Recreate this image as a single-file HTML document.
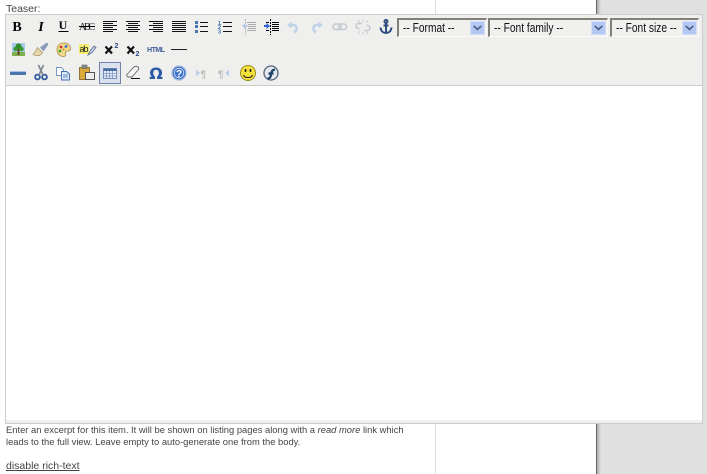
<!DOCTYPE html>
<html><head><meta charset="utf-8"><style>
html,body{margin:0;padding:0;background:#fff}
#p{position:relative;width:707px;height:474px;overflow:hidden;background:#fff;font-family:"Liberation Sans",sans-serif;color:#333}
.a{position:absolute}
svg.a{left:0;top:0}
.sel{position:absolute;top:18px;height:19px;box-sizing:border-box;background:#f0f0ee;border-top:2px solid #808078;border-left:2px solid #808078;border-right:1px solid #f8f8f4;border-bottom:1px solid #fbfbf6;font-size:13px;color:#111;line-height:16px;white-space:pre}
.sel b{position:absolute;left:4px;top:0;font-weight:normal;transform:scaleX(.785);transform-origin:0 0}
.sel i{position:absolute;right:1px;top:1px;width:15px;height:14px;box-sizing:border-box;background:#b4c7f4;border:1px solid #d5e0f8}
.sel i:after{content:"";position:absolute;left:3px;top:1px;width:5px;height:5px;border-right:2px solid #4d6185;border-bottom:2px solid #4d6185;transform:scale(.9,.8) rotate(45deg)}
.t{font-size:9.4px;line-height:12px;color:#444;white-space:nowrap;left:6px}
</style></head><body><div id="p">
<div class="a" style="left:435px;top:0;width:1px;height:474px;background:#ddd"></div>
<div class="a" style="left:596px;top:0;width:111px;height:474px;background:#e0e0e0"></div>
<div class="a" style="left:596px;top:0;width:5px;height:474px;background:linear-gradient(90deg,#666 0,#666 20%,#aaa 20%,#c8c8c8 60%,#e0e0e0 100%)"></div>
<div class="a t" style="top:3px;left:6px;font-size:10.500px;color:#444;line-height:13px">Teaser:</div>
<div class="a" style="left:5px;top:14px;width:698px;height:410px;box-sizing:border-box;border:1px solid #ccc;background:#efefee"></div>
<div class="a" style="left:6px;top:86px;width:696px;height:334px;background:#fff"></div>
<div class="a" style="left:6px;top:85px;width:696px;height:1px;background:#ccc"></div>
<div class="a" style="left:99px;top:62px;width:22px;height:22px;box-sizing:border-box;border:1px solid #6f83a8;background:#dbe2ee"></div>
<svg class="a" width="707" height="474" viewBox="0 0 707 474" style="font-family:'Liberation Sans',sans-serif">
<!-- row 1 -->
<text x="17" y="31" text-anchor="middle" font-family="Liberation Serif" font-weight="bold" font-size="14" fill="#000">B</text>
<text x="41" y="31" text-anchor="middle" font-family="Liberation Serif" font-weight="bold" font-style="italic" font-size="14" fill="#000">I</text>
<text x="63" y="29" text-anchor="middle" font-family="Liberation Serif" font-weight="bold" font-size="12" fill="#000">U</text>
<path d="M58.500 31.500h10" stroke="#000" stroke-width="1"/>
<text x="87" y="30" text-anchor="middle" font-family="Liberation Serif" font-size="10" fill="#222" textLength="16">ABC</text>
<path d="M79 26.500h16" stroke="#000"/>
<g stroke="#111" stroke-width="1">
<path d="M103 21.500h14M103 23.500h10M103 25.500h14M103 27.500h10M103 29.500h14M103 31.500h10"/>
<path d="M126 21.500h14M128 23.500h10M126 25.500h14M128 27.500h10M126 29.500h14M128 31.500h10"/>
<path d="M149 21.500h14M153 23.500h10M149 25.500h14M153 27.500h10M149 29.500h14M153 31.500h10"/>
<path d="M172 21.500h14M172 23.500h14M172 25.500h14M172 27.500h14M172 29.500h14M172 31.500h14"/>
<path d="M200 22.500h8M200 26.500h8M200 31.500h8M223 22.500h9M223 26.500h9M223 31.500h9"/>
</g>
<g fill="#4a76b5"><rect x="195" y="21" width="3" height="3"/><rect x="195" y="25" width="3" height="3"/><rect x="195" y="30" width="3" height="3"/></g>
<g font-size="5.500" font-weight="bold" fill="#3f6cae" text-anchor="middle"><text x="219.500" y="25">1</text><text x="219.500" y="29">2</text><text x="219.500" y="33.500">3</text></g>
<!-- outdent -->
<path d="M245.500 19v16" stroke="#b4b4b4" stroke-dasharray="2 1"/>
<path d="M247 22.500h9M248 24.500h8M248 26.500h8M248 28.500h8M247 30.500h9" stroke="#aaa"/>
<path d="M242 26l3.500-3v2h2v2h-2v2z" fill="#b5c9e6"/>
<!-- indent -->
<path d="M270.500 19v16" stroke="#000" stroke-dasharray="2 1"/>
<path d="M272 22.500h7M272 24.500h7M272 26.500h7M272 28.500h7M272 30.500h7M266 22.500h3M266 30.500h3" stroke="#000" stroke-width="1.100"/>
<path d="M264 25h2.500v-2l3.500 3-3.500 3v-2H264z" fill="#2c62d0"/>
<!-- undo/redo -->
<g fill="none" stroke="#c0d2ea" stroke-width="2.600"><path d="M291 25h2.500c3.500 0 4.500 5 .5 7.500"/><path d="M319 25h-2.500c-3.500 0 -4.500 5 -.5 7.500"/></g>
<path d="M287 25l4.500-3.500v7zM323 25l-4.500-3.500v7z" fill="#c0d2ea"/>
<!-- link -->
<g fill="none" stroke="#c6cad0" stroke-width="1.600"><rect x="333" y="24" width="8" height="5.500" rx="2.700"/><rect x="338.500" y="24" width="8" height="5.500" rx="2.700"/>
<path d="M362 23.500h-3.500a2.500 2.500 0 0 0 0 5h1M364 30.500h3.500a2.500 2.500 0 0 0 0-5h-1"/></g>
<path d="M363 19v3M358 20l2 3M368 20l-2 3M363 32v3M358 34l2-3M368 34l-2-3" stroke="#cbcdd0" fill="none"/>
<!-- anchor -->
<g fill="none" stroke="#2f4d7f" stroke-width="2"><circle cx="386" cy="21.500" r="1.500"/><path d="M386 23v10M383.500 25.500h5"/><path d="M380.500 27.500c.5 4 3 5.500 5.500 5.500s5-1.500 5.500-5.500"/></g>
<!-- row 2 -->
<rect x="12" y="43" width="13" height="13" fill="#a7c8ea"/><rect x="12" y="52" width="13" height="4" fill="#7db04a"/>
<circle cx="18.500" cy="46.500" r="3" fill="#2f8a2a"/><circle cx="15.500" cy="49" r="2.200" fill="#3a9a30"/><circle cx="21.500" cy="49" r="2.200" fill="#3a9a30"/><rect x="17.500" y="49" width="2" height="6" fill="#6a4420"/>
<path d="M37.500 47.500l5 5.500-3 2.500c-2 .5-5 0-6.500-1 1.500-1 2.500-3.500 4.500-7z" fill="#e6d8a8" stroke="#a3935f" stroke-width=".7"/>
<path d="M40 47.500l6-4.500c1.500-.5 2.500.5 2 2l-4.500 6.500z" fill="#8b9ab8"/>
<path d="M64 43c-4.500 0-7 2.500-7 6.500s2.500 7 6.500 7c2.500 0 2.500-2 2-3-.5-1.500 .5-2.500 2-2.500 2 0 3-1 3-2.500 0-3-3-5.500-6.500-5.500z" fill="#f3d98a" stroke="#a8893e" stroke-width=".8"/>
<circle cx="61" cy="47" r="1.400" fill="#c9362c"/><circle cx="66" cy="46.500" r="1.400" fill="#2c6ec9"/><circle cx="60" cy="51" r="1.400" fill="#3a9a30"/><circle cx="63.500" cy="49.500" r="1" fill="#d08b22"/>
<rect x="79" y="44" width="10" height="10" fill="#f5ee6e"/>
<text x="79.500" y="52" font-size="9" fill="#222" textLength="9">ab</text>
<path d="M88 55l2-4 4-5 2 1.500-4 5z" fill="#c9d6ea" stroke="#53688c" stroke-width=".8"/>
<path d="M105.500 46.500l6.500 7M112 46.500l-6.500 7M127.500 46.500l6.500 7M134 46.500l-6.500 7" stroke="#111" stroke-width="2.200"/>
<text x="114.500" y="48" font-size="7" font-weight="bold" fill="#2f4d7f">2</text>
<text x="135.500" y="56" font-size="7" font-weight="bold" fill="#2f4d7f">2</text>
<text x="156" y="52" text-anchor="middle" font-size="7" font-weight="bold" fill="#3f5f96" textLength="18">HTML</text>
<path d="M171 49.500h16" stroke="#222"/>
<!-- row 3 -->
<rect x="10" y="71" width="16" height="4" fill="#4a74b0"/><rect x="10" y="71" width="16" height="1" fill="#a5c0e4"/>
<g fill="none" stroke="#2f5a9e" stroke-width="1.800"><circle cx="37.500" cy="77" r="2.400"/><circle cx="44.500" cy="77" r="2.400"/></g>
<path d="M39 75l4.500-10M43 75l-4.500-10" stroke="#7f8790" stroke-width="1.700"/>
<path d="M56.500 67.500h5l2 2v6h-7z" fill="#fff" stroke="#6f93c6" stroke-width=".9"/><path d="M61.500 71.500h5l3 2.500v6h-8z" fill="#dfeafa" stroke="#3f6cae" stroke-width=".9"/>
<path d="M63 75h5M63 77h5" stroke="#3f6cae" stroke-width=".7"/>
<rect x="79.500" y="67.500" width="10" height="12" fill="#d9a93a" stroke="#7f5f1c" stroke-width=".8"/><rect x="82" y="65" width="5" height="3.500" fill="#8a8a8a" stroke="#555" stroke-width=".5"/>
<rect x="85.500" y="72.500" width="9" height="7" fill="#eee" stroke="#444" stroke-width=".9"/>
<g fill="#e8eef8" stroke="#5c7caa" stroke-width=".8"><rect x="103.500" y="68.500" width="13" height="10"/></g>
<rect x="103.500" y="68.500" width="13" height="2.500" fill="#4a6ea6"/>
<path d="M106.500 71v7.500M109.500 71v7.500M112.500 71v7.500M104 73.500h12M104 76h12" stroke="#7c98c0" stroke-width=".8"/>
<path d="M127 74.500l7-7.500c1-1 3-1 4 0 1 1 1 2 0 3l-6 7h-3c-1 0-3-1-2-2.500z" fill="#f6f6f6" stroke="#666" stroke-width=".9"/>
<path d="M131 78.500h9" stroke="#111"/>
<text x="156" y="79" text-anchor="middle" font-size="16" font-weight="bold" font-family="DejaVu Sans" fill="#2a5aa5">Ω</text>
<circle cx="179" cy="73" r="7" fill="#3f72c8" stroke="#a7bee0" stroke-width="1.300"/>
<circle cx="179" cy="73" r="4.800" fill="none" stroke="#dfe8f6" stroke-width=".8"/>
<text x="179" y="77" text-anchor="middle" font-size="10" font-weight="bold" fill="#fff">?</text>
<path d="M196 69.500l4 3.500-4 3.500z" fill="#bcd0ea"/><text x="200.500" y="77.500" font-size="10" font-weight="bold" fill="#b8b8b8">¶</text>
<text x="218" y="77.500" font-size="10" font-weight="bold" fill="#b8b8b8">¶</text><path d="M229 69.500l-4 3.500 4 3.500z" fill="#bcd0ea"/>
<circle cx="248" cy="73" r="7.500" fill="#f5e33a" stroke="#9a8a20"/>
<ellipse cx="245.500" cy="70.500" rx="1" ry="1.500" fill="#222"/><ellipse cx="250.500" cy="70.500" rx="1" ry="1.500" fill="#222"/>
<path d="M243.500 75c1.500 3.500 7.500 3.500 9 0" fill="none" stroke="#222" stroke-width="1.100"/>
<circle cx="271" cy="73" r="7" fill="#e6e9ee" stroke="#55667f" stroke-width="1.300"/>
<path d="M267.500 78.500c2.500 0 3-1 3.500-4 .5-3 1-4.500 4-5M268.500 73.500h5" fill="none" stroke="#1c3f66" stroke-width="2.200"/>
</svg>
<div class="sel" style="left:397px;width:90px"><b>-- Format --</b><i></i></div>
<div class="sel" style="left:488px;width:120px"><b>-- Font family --</b><i></i></div>
<div class="sel" style="left:610px;width:89px"><b>-- Font size --</b><i></i></div>
<div class="a t" style="top:424px">Enter an excerpt for this item. It will be shown on listing pages along with a <em>read more</em> link which</div>
<div class="a t" style="top:436px">leads to the full view. Leave empty to auto-generate one from the body.</div>
<div class="a t" style="top:460px;font-size:10.500px;line-height:13px;text-decoration:underline">disable rich-text</div>
</div></body></html>
